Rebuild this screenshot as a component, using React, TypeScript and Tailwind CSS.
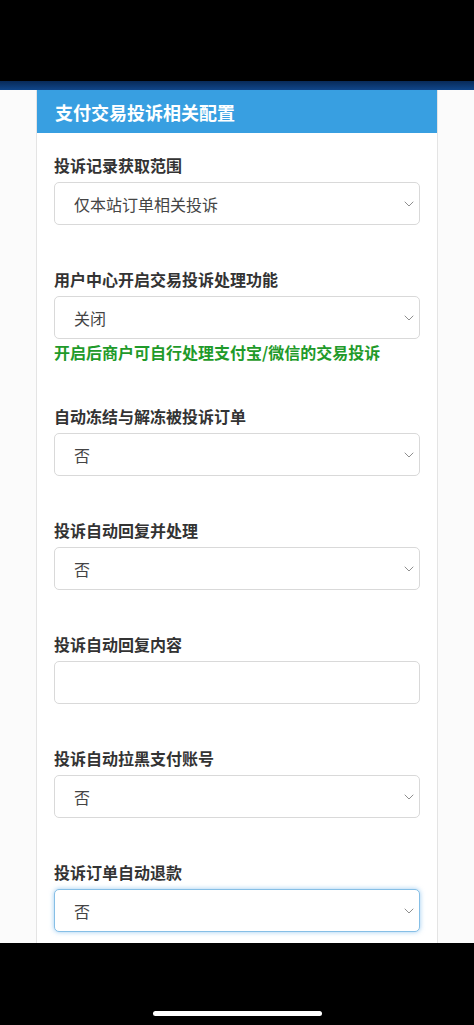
import { ChevronDown } from 'lucide-react';

interface Field {
  label: string;
  value?: string;
  kind: 'select' | 'input';
  help?: string;
  focused?: boolean;
}

const FIELDS: Field[] = [
  { label: '投诉记录获取范围', value: '仅本站订单相关投诉', kind: 'select' },
  {
    label: '用户中心开启交易投诉处理功能',
    value: '关闭',
    kind: 'select',
    help: '开启后商户可自行处理支付宝/微信的交易投诉',
  },
  { label: '自动冻结与解冻被投诉订单', value: '否', kind: 'select' },
  { label: '投诉自动回复并处理', value: '否', kind: 'select' },
  { label: '投诉自动回复内容', kind: 'input' },
  { label: '投诉自动拉黑支付账号', value: '否', kind: 'select' },
  { label: '投诉订单自动退款', value: '否', kind: 'select', focused: true },
];

const FONT = "font-['Noto_Sans_CJK_SC','Noto_Sans',sans-serif]";

function SelectBox({ field }: { field: Field }) {
  const border = field.focused
    ? 'border-[#86bfe6] shadow-[0_0_5px_rgba(102,175,233,0.65)]'
    : 'border-[#d9d9d9]';
  return (
    <div
      className={`h-[43px] w-full rounded-[5px] border bg-white flex items-center pl-[19px] pr-[2px] ${border}`}
    >
      <span className="flex-1 text-[16px] text-[#444] leading-none">{field.value}</span>
      {field.kind === 'select' && (
        <ChevronDown className="w-[16px] h-[16px] text-[#8f8f8f]" strokeWidth={1.5} />
      )}
    </div>
  );
}

export default function App() {
  return (
    <div className={`w-[474px] h-[1025px] bg-black flex flex-col overflow-hidden ${FONT}`}>
      <div className="h-[81px] shrink-0 bg-black" />
      <div className="h-[9px] shrink-0 bg-gradient-to-b from-[#082a58] to-[#10468a]" />

      <div className="h-[853px] shrink-0 bg-[#fbfbfb] px-[36px] overflow-hidden">
        <div className="h-full bg-white border-x border-[#e4e4e4]">
          <div className="h-[43px] bg-[#389fe1] flex items-center px-[18px]">
            <h1 className="text-[18px] font-bold text-white leading-none">支付交易投诉相关配置</h1>
          </div>

          <div className="px-[17px] pt-[21px]">
            {FIELDS.map((field) => (
              <div key={field.label} className="mb-[43px]">
                <label className="block text-[16px] font-bold text-[#333] leading-[22px] mb-[6px]">
                  {field.label}
                </label>
                <SelectBox field={field} />
                {field.help && (
                  <p className="text-[16px] font-bold text-[#1f9a2a] leading-[22px] mt-[2px] -mb-[1px]">
                    {field.help}
                  </p>
                )}
              </div>
            ))}
          </div>
        </div>
      </div>

      <div className="flex-1 bg-black flex items-end justify-center pb-[9px]">
        <div className="w-[169px] h-[5px] rounded-full bg-white" />
      </div>
    </div>
  );
}
